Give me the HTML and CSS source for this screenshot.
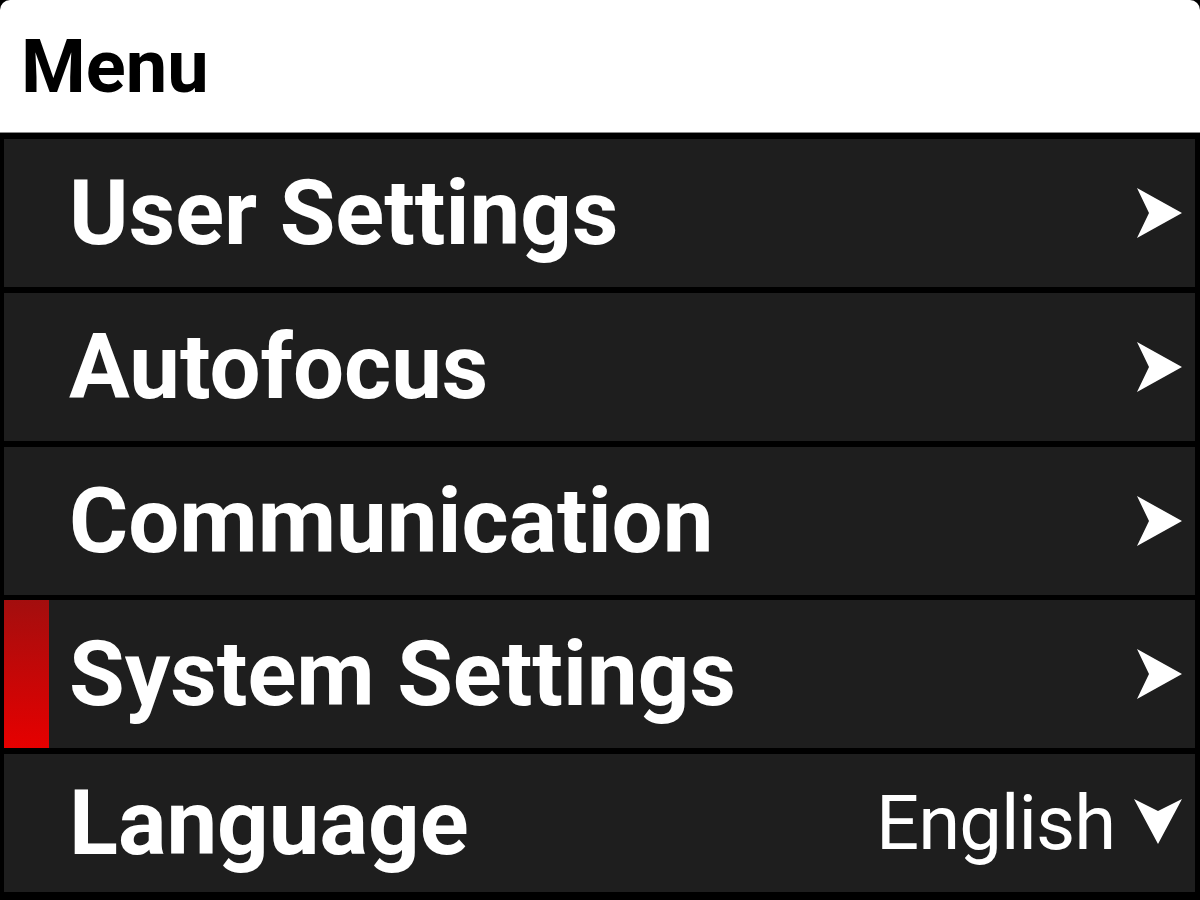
FILE: index.html
```html
<html>
<head>
<meta charset="utf-8">
<title>Menu</title>
<link rel="stylesheet" href="styles.css">
</head>
<body>

<div class="screen">
	<div class="header">Menu</div>

	<div class="list">
		<div class="row">
			<span class="label">User Settings</span>
			<svg class="chev" viewBox="0 0 48 52"><polygon points="2,1 47,26 2,51 14,26"/></svg>
		</div>
		<div class="row">
			<span class="label">Autofocus</span>
			<svg class="chev" viewBox="0 0 48 52"><polygon points="2,1 47,26 2,51 14,26"/></svg>
		</div>
		<div class="row">
			<span class="label">Communication</span>
			<svg class="chev" viewBox="0 0 48 52"><polygon points="2,1 47,26 2,51 14,26"/></svg>
		</div>
		<div class="row selected">
			<span class="label">System Settings</span>
			<svg class="chev" viewBox="0 0 48 52"><polygon points="2,1 47,26 2,51 14,26"/></svg>
		</div>
		<div class="row last">
			<span class="label">Language</span>
			<span class="value">English</span>
			<svg class="chev_down" viewBox="0 0 50 48"><polygon points="1,2 25,14 49,2 25,47"/></svg>
		</div>
	</div>
</div>

</body>
</html>
```

FILE: styles.css
```css
	body{
		margin: 0px;
		padding: 0px;
		background-color: #000;
		font-family: Roboto, "Liberation Sans", sans-serif;
	}

	.screen{
		width: 1200px;
		height: 900px;
		overflow: hidden;
		background-color: #000;
	}

	/* 白色標題列 */
	.header{
		height: 133px;
		background-color: #fff;
		border-top-left-radius: 10px;
		border-top-right-radius: 10px;
		color: #000;
		font-weight: bold;
		font-size: 74px;
		padding-left: 21px;
		box-sizing: border-box;
		display: flex;
		align-items: center;
		border-bottom: 1px solid #8a8a8a;
	}

	.list{
		display: flex;
		flex-direction: column;
		gap: 5.75px;
		padding: 6px 5px 0px 4px;
	}

	.row{
		height: 148px;
		background-color: #1e1e1e;
		display: flex;
		align-items: center;
		padding-left: 65px;
		padding-right: 12px;
		color: #fff;
		position: relative;
	}

	.row.last{
		height: 138px;
	}

	/* 目前選到的項目：左側紅條 */
	.row.selected::before{
		content: "";
		position: absolute;
		left: 0;
		top: 0;
		bottom: 0;
		width: 45px;
		background: linear-gradient(#a30e0e, #e60000);
	}

	.label{
		font-weight: bold;
		font-size: 90.5px;
		flex: 1;
		white-space: nowrap;
	}

	.value{
		font-size: 76px;
		letter-spacing: -1px;
		margin-right: 18px;
	}

	.chev{
		width: 48px;
		height: 52px;
		fill: #fff;
	}

	.chev_down{
		width: 50px;
		height: 48px;
		fill: #fff;
		margin-bottom: 4px;
	}
```
